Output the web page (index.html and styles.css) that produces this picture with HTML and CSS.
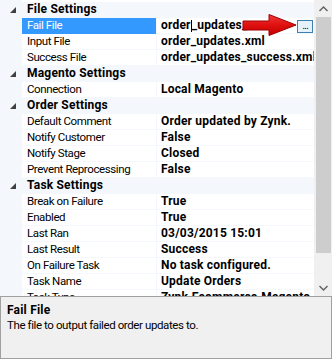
FILE: index.html
```html
<!DOCTYPE html>
<html>
<head>
<meta charset="utf-8">
<link rel="stylesheet" href="styles.css">
</head>
<body>
<div class="window">
  <div class="grid-area">
    <div class="grid">
      <div class="cat"><span class="m"><svg class="tri" width="6" height="6" viewBox="0 0 6 6"><path d="M6 0 L6 6 L0 6 Z" fill="#404040"/></svg></span><span class="ctext">File Settings</span></div>
      <div class="row sel"><span class="m"></span><span class="name">Fail File</span><span class="val">order<span class="ibeam"></span>_updates_</span></div>
      <div class="row"><span class="m"></span><span class="name">Input File</span><span class="val">order_updates.xml</span></div>
      <div class="row"><span class="m"></span><span class="name">Success File</span><span class="val">order_updates_success.xml</span></div>
      <div class="cat"><span class="m"><svg class="tri" width="6" height="6" viewBox="0 0 6 6"><path d="M6 0 L6 6 L0 6 Z" fill="#404040"/></svg></span><span class="ctext">Magento Settings</span></div>
      <div class="row"><span class="m"></span><span class="name">Connection</span><span class="val">Local Magento</span></div>
      <div class="cat"><span class="m"><svg class="tri" width="6" height="6" viewBox="0 0 6 6"><path d="M6 0 L6 6 L0 6 Z" fill="#404040"/></svg></span><span class="ctext">Order Settings</span></div>
      <div class="row"><span class="m"></span><span class="name">Default Comment</span><span class="val">Order updated by Zynk.</span></div>
      <div class="row"><span class="m"></span><span class="name">Notify Customer</span><span class="val">False</span></div>
      <div class="row"><span class="m"></span><span class="name">Notify Stage</span><span class="val">Closed</span></div>
      <div class="row"><span class="m"></span><span class="name">Prevent Reprocessing</span><span class="val">False</span></div>
      <div class="cat"><span class="m"><svg class="tri" width="6" height="6" viewBox="0 0 6 6"><path d="M6 0 L6 6 L0 6 Z" fill="#404040"/></svg></span><span class="ctext">Task Settings</span></div>
      <div class="row"><span class="m"></span><span class="name">Break on Failure</span><span class="val">True</span></div>
      <div class="row"><span class="m"></span><span class="name">Enabled</span><span class="val">True</span></div>
      <div class="row"><span class="m"></span><span class="name">Last Ran</span><span class="val">03/03/2015 15:01</span></div>
      <div class="row"><span class="m"></span><span class="name">Last Result</span><span class="val">Success</span></div>
      <div class="row"><span class="m"></span><span class="name">On Failure Task</span><span class="val">No task configured.</span></div>
      <div class="row"><span class="m"></span><span class="name">Task Name</span><span class="val">Update Orders</span></div>
      <div class="row"><span class="m"></span><span class="name">Task Type</span><span class="val">Zynk.Ecommerce.Magento.Update</span></div>
    </div>
    <div class="scrollbar">
      <div class="sb-btn"><svg width="9" height="6" viewBox="0 0 9 6"><polyline points="0.5,5 4.5,1 8.5,5" fill="none" stroke="#606060" stroke-width="1.4"/></svg></div>
      <div class="sb-thumb"></div>
      <div class="sb-track"></div>
      <div class="sb-btn"><svg width="9" height="6" viewBox="0 0 9 6"><polyline points="0.5,1 4.5,5 8.5,1" fill="none" stroke="#606060" stroke-width="1.4"/></svg></div>
    </div>
  </div>
  <div class="help">
    <div class="help-title">Fail File</div>
    <div class="help-desc">The file to output failed order updates to.</div>
  </div>
  <svg class="arrow" width="60" height="26" viewBox="0 0 60 26">
    <defs>
      <linearGradient id="rg" x1="0" y1="0" x2="0" y2="1">
        <stop offset="0" stop-color="#f03a3a"/>
        <stop offset="0.5" stop-color="#e01010"/>
        <stop offset="1" stop-color="#c40000"/>
      </linearGradient>
    </defs>
    <path d="M2 8 L28 8 L28 1.5 L55 12 L28 22.5 L28 17 L2 17 Z" fill="url(#rg)" stroke="#a00000" stroke-width="1"/>
  </svg>
  <div class="ellipsis">...</div>
</div>
</body>
</html>
```
FILE: styles.css
```css
body {
  margin: 0;
  font-family: Roboto, "Liberation Sans", sans-serif;
  font-size: 11.5px;
  letter-spacing: -0.4px;
  color: #000;
}
.window {
  width: 332px;
  height: 359px;
  display: flex;
  flex-direction: column;
  background: #fff;
  position: relative;
  overflow: hidden;
}
.grid-area {
  display: flex;
  height: 296px;
  flex: none;
  overflow: hidden;
}
.grid {
  width: 314px;
  height: 296px;
  flex: none;
  overflow: hidden;
  padding-top: 2px;
  box-sizing: border-box;
  background: linear-gradient(to right, #f4f7fc 22px, #fff 22px);
}
.row, .cat {
  display: flex;
  height: 16px;
  line-height: 15px;
  white-space: nowrap;
}
.m {
  width: 22px;
  flex: none;
  display: flex;
  align-items: center;
}
.tri {
  margin-left: 10px;
}
.cat {
  background: #f4f7fc;
}
.ctext, .val, .help-title {
  font-weight: bold;
  font-size: 12px;
  letter-spacing: 0.2px;
}
.ctext {
  padding-left: 5px;
}
.name {
  width: 134px;
  flex: none;
  box-sizing: border-box;
  padding-left: 5px;
  border-bottom: 1px solid #f4f7fc;
  overflow: hidden;
}
.val {
  flex: 1;
  border-left: 1px solid #f4f7fc;
  border-bottom: 1px solid #f4f7fc;
  padding-left: 4px;
  overflow: hidden;
}
.sel .name {
  background: #3399ff;
  color: #fff;
  border-bottom-color: #3399ff;
}
.ibeam {
  display: inline-block;
  width: 1px;
  height: 12px;
  background: #000;
  vertical-align: -3px;
}
.scrollbar {
  flex: 1;
  display: flex;
  flex-direction: column;
  background: #f0f0f0;
}
.sb-btn {
  height: 17px;
  flex: none;
  display: flex;
  align-items: center;
  justify-content: center;
}
.sb-thumb {
  height: 236px;
  flex: none;
  margin: 0 1px 0 2px;
  background: #cdcdcd;
}
.sb-track {
  flex: 1;
}
.help {
  flex: 1;
  background: #f0f0f0;
  border: 1px solid #a0a0a0;
  padding: 6px 6px 0;
  line-height: 15px;
}
.arrow {
  position: absolute;
  left: 241px;
  top: 13px;
}
.ellipsis {
  position: absolute;
  left: 297px;
  top: 20px;
  width: 14px;
  height: 11px;
  border: 1px solid #3c7fb1;
  background: #e5f1fb;
  color: #000;
  font-family: "DejaVu Sans", sans-serif;
  font-size: 9px;
  line-height: 11px;
  text-align: center;
  letter-spacing: -1px;
}
```
